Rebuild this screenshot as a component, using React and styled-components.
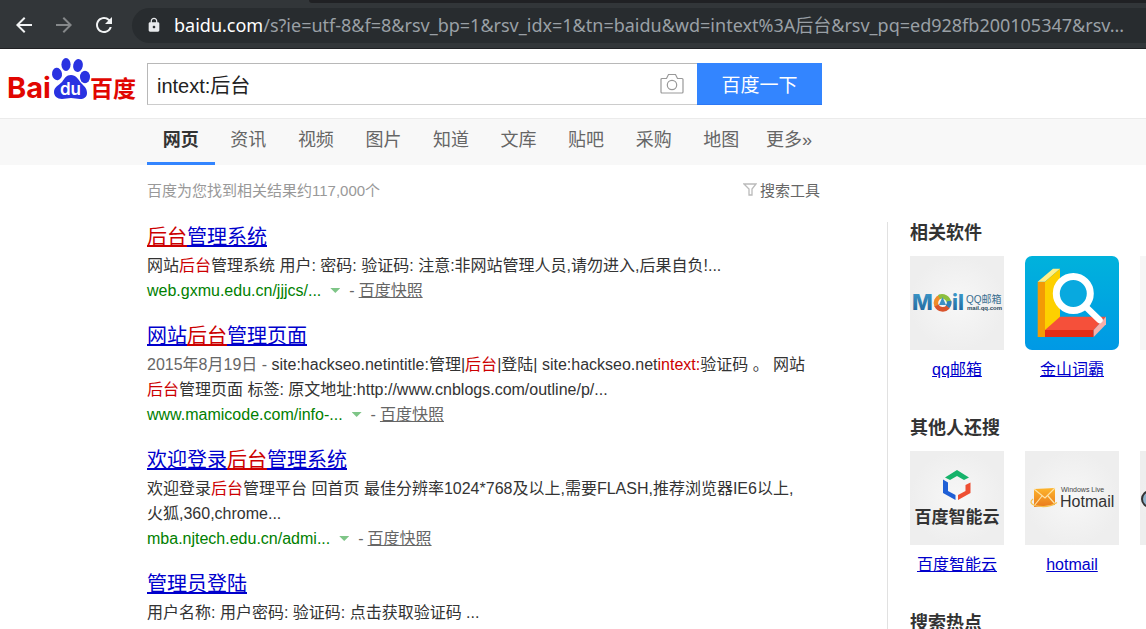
import React from 'react';
import styled, { createGlobalStyle } from 'styled-components';

import { MdArrowBack, MdArrowForward, MdRefresh, MdLock } from 'react-icons/md';

const GlobalStyle = createGlobalStyle`
    *{
        box-sizing:border-box;
    }
    body{
        margin:0;
        background:#fff;
        color:#333;
        font-family:"Liberation Sans", "Noto Sans CJK SC", sans-serif;
        font-size:16px;
    }
    em{
        font-style:normal;
        color:#c00;
    }
`

const Page = styled.div`
    height:100vh;
    overflow:hidden;
`

/* browser bar */
const TabStrip = styled.div`
    display:flex;
    height:3px;
    background:#323639;
`
const TabStripRest = styled.div`
    flex:1;
    margin-left:309px;
    background:#202124;
    border-bottom-left-radius:8px;
`
const Toolbar = styled.div`
    display:flex;
    align-items:center;
    height:46px;
    padding:0 0 1px 12px;
    background:#323639;
    border-bottom:1px solid #202124;
`
const NavButton = styled.button`
    display:flex;
    padding:0;
    margin-right:16px;
    border:0;
    background:none;
    color:${p => p.$dim ? '#85888a' : '#f1f3f4'};
`
const Omnibox = styled.div`
    display:flex;
    align-items:center;
    flex:1;
    min-width:0;
    height:35px;
    padding-left:14px;
    border-radius:18px 0 0 18px;
    background:#282c2f;
    color:#e8eaed;
`
const Address = styled.div`
    flex:1;
    min-width:0;
    margin-left:12px;
    overflow:hidden;
    white-space:nowrap;
    font-family:"Noto Sans", "Noto Sans CJK SC", sans-serif;
    font-size:18px;
    line-height:34px;
    color:#9aa0a6;
    b{
        font-weight:400;
        color:#fff;
    }
`

/* search header */
const Header = styled.header`
    display:flex;
    align-items:center;
    height:69px;
    padding-left:6px;
`
const LogoLink = styled.a`
    display:flex;
    width:141px;
`
const SearchForm = styled.form`
    display:flex;
    height:42px;
`
const SearchBox = styled.div`
    display:flex;
    align-items:center;
    width:550px;
    padding:0 13px 0 9px;
    border:1px solid #b8b8b8;
    border-right:0;
    border-bottom-color:#ccc;
`
const SearchInput = styled.input`
    flex:1;
    min-width:0;
    padding:2px 0 0;
    border:0;
    outline:0;
    font:inherit;
    font-size:20px;
    color:#222;
`
const CameraButton = styled.button`
    display:flex;
    padding:0;
    border:0;
    background:none;
`
const SubmitButton = styled.button`
    width:125px;
    padding:0;
    border:0;
    border-bottom:1px solid #2d78f4;
    background:#3385ff;
    color:#fff;
    font:inherit;
    font-size:19px;
`

/* channel tabs */
const TabBar = styled.nav`
    display:flex;
    height:47px;
    padding-left:147px;
    border-top:1px solid #ebebeb;
    background:#f8f8f8;
`
const Tabs = styled.div`
    display:grid;
    grid-template-columns:repeat(9, 1fr);
    width:608px;
`
const Tab = styled.a`
    padding-left:${p => p.$more ? '11px' : '0'};
    border-bottom:3px solid ${p => p.$active ? '#3385ff' : 'transparent'};
    color:${p => p.$active ? '#333' : '#666'};
    font-size:18px;
    font-weight:${p => p.$active ? 700 : 400};
    line-height:43px;
    text-align:center;
    text-decoration:none;
    white-space:nowrap;
`

const Info = styled.div`
    display:flex;
    justify-content:space-between;
    align-items:center;
    width:820px;
    height:48px;
    margin-bottom:8px;
    padding-left:147px;
    color:#999;
    font-size:15px;
`
const ToolsButton = styled.button`
    display:flex;
    align-items:center;
    gap:3px;
    padding:0;
    border:0;
    background:none;
    color:#666;
    font:inherit;
`

/* results */
const Content = styled.div`
    display:flex;
    gap:67px;
    padding-left:147px;
`
const Results = styled.main`
    flex:0 0 673px;
`
const Result = styled.article`
    margin-bottom:17px;
    line-height:25px;
`
const ResultTitle = styled.h3`
    margin:0;
    font-size:20px;
    font-weight:400;
    line-height:32px;
    a{
        color:#00c;
        text-decoration-thickness:2px;
    }
    em{
        text-decoration:underline 2px;
    }
`
const Abstract = styled.p`
    margin:0;
`
const DateText = styled.span`
    color:#666;
`
const Source = styled.div`
    display:flex;
    align-items:center;
    color:#666;
`
const SourceLink = styled.a`
    color:#008000;
    text-decoration:none;
`
const Caret = styled.button`
    width:10px;
    height:5px;
    margin:0 9px;
    padding:0;
    border:0;
    background:#7ec587;
    clip-path:polygon(0 0, 100% 0, 50% 100%);
`
const Snapshot = styled.a`
    margin-left:4px;
    color:#666;
`

/* right column */
const Sidebar = styled.aside`
    flex:1;
    min-width:0;
    margin-top:1px;
    padding-left:22px;
    overflow:hidden;
    border-left:1px solid #e1e1e1;
`
const SideTitle = styled.h2`
    margin:0 0 12px;
    font-size:18px;
    font-weight:700;
    line-height:22px;
`
const TileRow = styled.div`
    display:flex;
    gap:21px;
    margin-bottom:36px;
`
const Tile = styled.a`
    display:flex;
    flex:0 0 94px;
    flex-direction:column;
    align-items:center;
    gap:9px;
    color:#00c;
    line-height:22px;
    svg{
        display:block;
    }
`

const tabs = ['网页', '资讯', '视频', '图片', '知道', '文库', '贴吧', '采购', '地图']

const results = [
    {
        title:<><em>后台</em>管理系统</>,
        text:<>网站<em>后台</em>管理系统 用户: 密码: 验证码: 注意:非网站管理人员,请勿进入,后果自负!...</>,
        url:"web.gxmu.edu.cn/jjjcs/..."
    },
    {
        title:<>网站<em>后台</em>管理页面</>,
        date:"2015年8月19日 - ",
        text:<>site:hackseo.netintitle:管理|<em>后台</em>|登陆| site:hackseo.net<em>intext:</em>验证码 。 网站<br/><em>后台</em>管理页面 标签: 原文地址:http://www.cnblogs.com/outline/p/...</>,
        url:"www.mamicode.com/info-..."
    },
    {
        title:<>欢迎登录<em>后台</em>管理系统</>,
        text:<>欢迎登录<em>后台</em>管理平台 回首页 最佳分辨率1024*768及以上,需要FLASH,推荐浏览器IE6以上,<br/>火狐,360,chrome...</>,
        url:"mba.njtech.edu.cn/admi..."
    },
    {
        title:"管理员登陆",
        text:"用户名称: 用户密码: 验证码: 点击获取验证码 ..."
    },
]

const Logo = () => (
    <svg width="130" height="54" viewBox="-2 0 130 54" role="img" aria-label="百度">
        <g fill="#e10601" fontWeight="700">
            <text x="-1" y="41" fontFamily="Inter, sans-serif" fontSize="29">Bai</text>
            <text x="82" y="40" fontFamily="Noto Sans CJK SC, sans-serif" fontSize="23">百度</text>
        </g>
        <g fill="#2932e1">
            <ellipse cx="49" cy="17" rx="5" ry="6.2" transform="rotate(-8 49 17)"/>
            <ellipse cx="58" cy="7.5" rx="4.6" ry="6.5"/>
            <ellipse cx="70" cy="8.5" rx="4.8" ry="6.5" transform="rotate(12 70 8.5)"/>
            <ellipse cx="77" cy="20" rx="5" ry="6.2"/>
            <path d="M63 18c5 0 7 4 10 8 3 3 6 5 6 10 0 4-3 6-7 6-3 0-6-1-9-1s-6 1-9 1c-5 0-8-3-8-7 0-5 5-7 8-10 3-4 4-7 9-7z"/>
        </g>
        <text x="52" y="38" fill="#fff" fontFamily="Inter, sans-serif" fontSize="17" fontWeight="600">du</text>
    </svg>
)

const CameraIcon = () => (
    <svg width="24" height="22" viewBox="0 0 24 22" fill="none" stroke="#999" strokeWidth="1.2">
        <path d="M2 5.5h4.5l2-4h7l2 4H22a1 1 0 0 1 1 1V19a1 1 0 0 1-1 1H2a1 1 0 0 1-1-1V6.5a1 1 0 0 1 1-1z"/>
        <circle cx="12" cy="12" r="4.7"/>
    </svg>
)

const FilterIcon = () => (
    <svg width="14" height="13" viewBox="0 0 14 13" fill="none" stroke="#bbb" strokeWidth="1.3">
        <path d="M1 1h12L9 6v6H6V6z"/>
    </svg>
)

const TileDefs = () => (
    <svg width="0" height="0" display="block" aria-hidden="true">
        <defs>
            <radialGradient id="tileGrey">
                <stop offset="0" stopColor="#f7f7f7"/>
                <stop offset="1" stopColor="#eee"/>
            </radialGradient>
            <linearGradient id="tileBlue" x1="0" y1="0" x2="0" y2="1">
                <stop offset="0" stopColor="#00b2dc"/>
                <stop offset="1" stopColor="#0099e5"/>
            </linearGradient>
            <linearGradient id="mailBlue" x1="0" y1="0" x2="0" y2="1">
                <stop offset="0" stopColor="#3f9fcf"/>
                <stop offset="1" stopColor="#1f5f96"/>
            </linearGradient>
            <linearGradient id="mailOrange" x1="0" y1="0" x2="0" y2="1">
                <stop offset="0" stopColor="#fdb52c"/>
                <stop offset="1" stopColor="#ea7a1c"/>
            </linearGradient>
        </defs>
    </svg>
)

const QQMail = () => (
    <svg width="94" height="94" viewBox="0 0 94 94">
        <rect width="94" height="94" fill="url(#tileGrey)"/>
        <text x="2" y="54" fill="url(#mailBlue)" fontFamily="Inter, sans-serif" fontSize="22" fontWeight="800">M</text>
        <g fill="none" strokeWidth="4.5">
            <path d="M26.500 50a7 7 0 0 1 4-9.500" stroke="#f08c2a"/>
            <path d="M29 41a7 7 0 0 1 10 5.500" stroke="#8cbf3f"/>
            <path d="M39.300 45a7 7 0 0 1-2 6" stroke="#2f7fb8"/>
            <path d="M26.500 49.500a7 7 0 0 0 11.500 1.500" stroke="#d9532c"/>
        </g>
        <path d="M32.500 41l3.500 8h-7z" fill="#3c8fc4"/>
        <text x="42" y="54" fill="url(#mailBlue)" fontFamily="Inter, sans-serif" fontSize="21" fontWeight="800">il</text>
        <text x="56" y="47" fill="#3a6f90" fontFamily="Liberation Sans, Noto Sans CJK SC, sans-serif" fontSize="10">QQ邮箱</text>
        <text x="57" y="54" fill="#2d4b5e" fontFamily="Liberation Sans, sans-serif" fontSize="6" fontWeight="700">mail.qq.com</text>
    </svg>
)

const PowerWord = () => (
    <svg width="94" height="94" viewBox="0 0 94 94">
        <rect width="94" height="94" rx="7" fill="url(#tileBlue)"/>
        <path d="M12.700 25.700H20V81h-7.300z" fill="#f39a05"/>
        <path d="M12.700 25.700L28 12.700h7L20 25.700z" fill="#fff08a"/>
        <path d="M20 25.700l15-13v50L20 75z" fill="#fdd000"/>
        <path d="M20 74l15-13.300h46L68.700 74z" fill="#f5503a"/>
        <path d="M20 74h48.700v7H20z" fill="#e32c17"/>
        <path d="M68.700 74L81 60.700v7.500L68.700 81z" fill="#f7b0aa"/>
        <circle cx="48.300" cy="37.500" r="17" fill="#08a9df" stroke="#fff" strokeWidth="7"/>
        <path d="M61 51l13.500 13" stroke="#fff" strokeWidth="6.500" strokeLinecap="round"/>
    </svg>
)

const BaiduCloud = () => (
    <svg width="94" height="94" viewBox="0 0 94 94">
        <rect width="94" height="94" fill="url(#tileGrey)"/>
        <path d="M35 26.500L47 19l12 7.500-5 2.500-7-4-7 4z" fill="#16b36b"/>
        <path d="M33 28.500l5 3V40l7.500 4v5L33 42z" fill="#1f5fd6"/>
        <path d="M60.500 31.500l-5 2.500V40L48 44v5l12.500-7z" fill="#ee4f33"/>
        <text x="47" y="72" fill="#333" textAnchor="middle" fontFamily="Noto Sans CJK SC, sans-serif" fontSize="17" fontWeight="700">百度智能云</text>
    </svg>
)

const Hotmail = () => (
    <svg width="94" height="94" viewBox="0 0 94 94">
        <rect width="94" height="94" fill="url(#tileGrey)"/>
        <path d="M9 38l21-1v17L9 56z" fill="url(#mailOrange)"/>
        <path d="M9 38l11 9 10-10M9 55l8-10M30 53l-7-8" fill="none" stroke="#fde3a8" strokeWidth="1.2"/>
        <path d="M8 48c-3 2-3 5 2 6.500 8 2 16 1 22-3" fill="none" stroke="#f6c04a" strokeWidth="1.2"/>
        <text x="36" y="41" fill="#444" fontFamily="Liberation Sans, sans-serif" fontSize="7">Windows Live</text>
        <text x="35" y="56" fill="#333" fontFamily="Liberation Sans, sans-serif" fontSize="16">Hotmail</text>
    </svg>
)

const PlainTile = () => (
    <svg width="94" height="94" viewBox="0 0 94 94">
        <rect width="94" height="94" fill="#f6f6f6"/>
    </svg>
)

const GlobeTile = () => (
    <svg width="94" height="94" viewBox="0 0 94 94">
        <rect width="94" height="94" fill="url(#tileGrey)"/>
        <circle cx="10" cy="48" r="8" fill="#8fb4cc" stroke="#333" strokeWidth="2"/>
    </svg>
)

const App = () => {
    return (
        <Page>
            <GlobalStyle/>
            <TileDefs/>

            <TabStrip><TabStripRest/></TabStrip>
            <Toolbar>
                <NavButton type="button" aria-label="后退"><MdArrowBack size={24}/></NavButton>
                <NavButton type="button" aria-label="前进" $dim><MdArrowForward size={24}/></NavButton>
                <NavButton type="button" aria-label="刷新"><MdRefresh size={24}/></NavButton>
                <Omnibox>
                    <MdLock size={16}/>
                    <Address><b>baidu.com</b>/s?ie=utf-8&amp;f=8&amp;rsv_bp=1&amp;rsv_idx=1&amp;tn=baidu&amp;wd=intext%3A后台&amp;rsv_pq=ed928fb200105347&amp;rsv...</Address>
                </Omnibox>
            </Toolbar>

            <Header>
                <LogoLink href="#"><Logo/></LogoLink>
                <SearchForm>
                    <SearchBox>
                        <SearchInput type="text" name="wd" aria-label="搜索" defaultValue="intext:后台"/>
                        <CameraButton type="button" aria-label="按图片搜索"><CameraIcon/></CameraButton>
                    </SearchBox>
                    <SubmitButton type="submit">百度一下</SubmitButton>
                </SearchForm>
            </Header>

            <TabBar>
                <Tabs>
                    {tabs.map((name, i) => <Tab href="#" key={name} $active={i === 0}>{name}</Tab>)}
                </Tabs>
                <Tab href="#" $more>更多»</Tab>
            </TabBar>

            <Info>
                <span>百度为您找到相关结果约117,000个</span>
                <ToolsButton type="button"><FilterIcon/>搜索工具</ToolsButton>
            </Info>

            <Content>
                <Results>
                    {results.map((item) => (
                        <Result key={item.url || 'last'}>
                            <ResultTitle><a href="#">{item.title}</a></ResultTitle>
                            <Abstract>{item.date && <DateText>{item.date}</DateText>}{item.text}</Abstract>
                            {item.url && (
                                <Source>
                                    <SourceLink href="#">{item.url}</SourceLink>
                                    <Caret type="button" aria-label="更多"/>
                                    -
                                    <Snapshot href="#">百度快照</Snapshot>
                                </Source>
                            )}
                        </Result>
                    ))}
                </Results>

                <Sidebar>
                    <SideTitle>相关软件</SideTitle>
                    <TileRow>
                        <Tile href="#"><QQMail/>qq邮箱</Tile>
                        <Tile href="#"><PowerWord/>金山词霸</Tile>
                        <Tile href="#" aria-label="软件"><PlainTile/></Tile>
                    </TileRow>
                    <SideTitle>其他人还搜</SideTitle>
                    <TileRow>
                        <Tile href="#"><BaiduCloud/>百度智能云</Tile>
                        <Tile href="#"><Hotmail/>hotmail</Tile>
                        <Tile href="#" aria-label="网站"><GlobeTile/></Tile>
                    </TileRow>
                    <SideTitle>搜索热点</SideTitle>
                </Sidebar>
            </Content>
        </Page>
    );
}

export default App;
